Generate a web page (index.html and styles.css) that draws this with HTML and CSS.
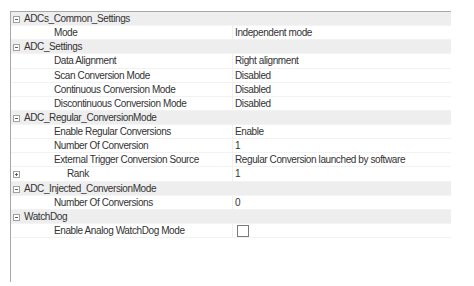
FILE: index.html
```html
<!DOCTYPE html>
<html lang="en">
<head>
    <meta charset="UTF-8">
    <title>ADC Parameter Settings</title>
    <link rel="stylesheet" href="styles.css">
</head>
<body>
<div class="grid">
    <div class="group"><span class="toggle minus"></span>ADCs_Common_Settings</div>
    <div class="row"><div class="name">Mode</div><div class="value">Independent mode</div></div>

    <div class="group"><span class="toggle minus"></span>ADC_Settings</div>
    <div class="row"><div class="name">Data Alignment</div><div class="value">Right alignment</div></div>
    <div class="row"><div class="name">Scan Conversion Mode</div><div class="value">Disabled</div></div>
    <div class="row"><div class="name">Continuous Conversion Mode</div><div class="value">Disabled</div></div>
    <div class="row"><div class="name">Discontinuous Conversion Mode</div><div class="value">Disabled</div></div>

    <div class="group"><span class="toggle minus"></span>ADC_Regular_ConversionMode</div>
    <div class="row"><div class="name">Enable Regular Conversions</div><div class="value">Enable</div></div>
    <div class="row"><div class="name">Number Of Conversion</div><div class="value">1</div></div>
    <div class="row"><div class="name">External Trigger Conversion Source</div><div class="value">Regular Conversion launched by software</div></div>
    <div class="row"><div class="name sub"><span class="toggle plus"></span>Rank</div><div class="value">1</div></div>

    <div class="group"><span class="toggle minus"></span>ADC_Injected_ConversionMode</div>
    <div class="row"><div class="name">Number Of Conversions</div><div class="value">0</div></div>

    <div class="group"><span class="toggle minus"></span>WatchDog</div>
    <div class="row"><div class="name">Enable Analog WatchDog Mode</div><div class="value"><span class="check"></span></div></div>
</div>
</body>
</html>
```

FILE: styles.css
```css
body {
    margin: 0;
    background-color: #ffffff;
    font-family: "Liberation Sans", Arial, sans-serif;
    font-size: 10px;
    letter-spacing: -0.4px;
    color: #333333;
}

.grid {
    width: 440px;
    height: 270px;
    margin: 11px 0 0 10px;
    border-top: 1px solid #a8a8a8;
    border-left: 1px solid #a8a8a8;
}

.group {
    position: relative;
    height: 14.125px;
    line-height: 14px;
    padding-left: 13px;
    background-color: #eeeeee;
    border-bottom: 1px solid #f4f4f4;
    box-sizing: border-box;
}

.row {
    display: flex;
    height: 14.125px;
    line-height: 14px;
    border-bottom: 1px solid #f2f2f2;
    box-sizing: border-box;
}

.name {
    position: relative;
    width: 178px;
    padding-left: 43px;
}

.name.sub {
    padding-left: 56px;
    width: 165px;
}

.value {
    flex: 1;
    padding-left: 2px;
    border-left: 1px solid #f0f0f0;
}

.toggle {
    position: absolute;
    left: 2px;
    top: 4px;
    width: 5px;
    height: 5px;
    border: 1px solid #a0a0a0;
    background-color: #ffffff;
}

.toggle::before {
    content: "";
    position: absolute;
    left: 1px;
    top: 2px;
    width: 3px;
    height: 1px;
    background-color: #606060;
}

.toggle.plus::after {
    content: "";
    position: absolute;
    left: 2px;
    top: 1px;
    width: 1px;
    height: 3px;
    background-color: #606060;
}

.check {
    display: inline-block;
    width: 10px;
    height: 10px;
    margin: 1px 0 0 2px;
    border: 1px solid #7a7a7a;
    vertical-align: top;
}
```
